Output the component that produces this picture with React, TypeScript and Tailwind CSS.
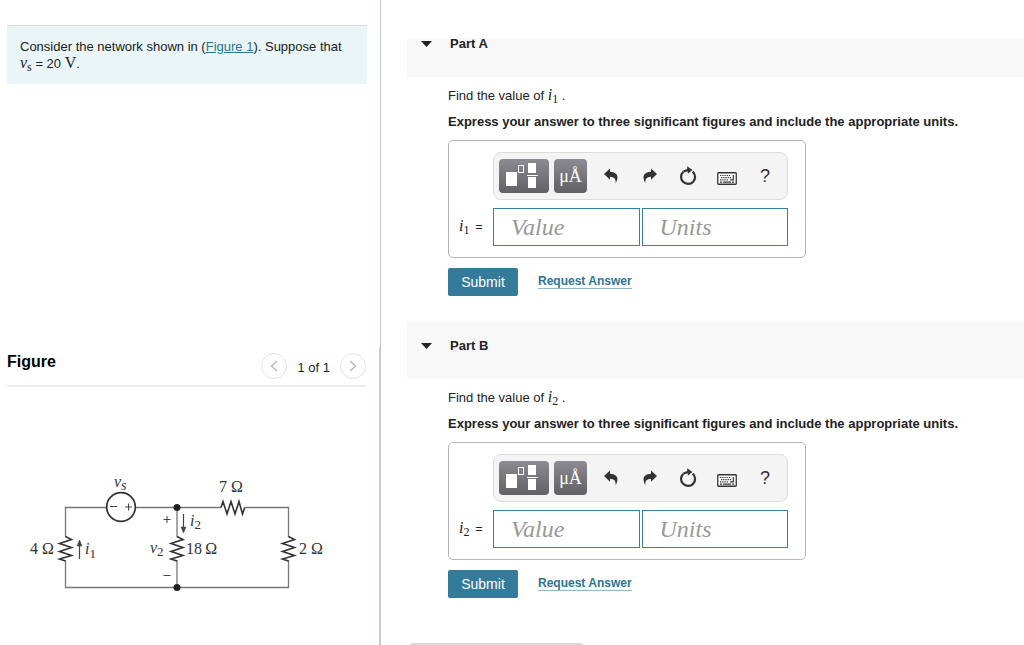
import { useState } from 'react';
import type { ReactNode } from 'react';

interface PartProps {
  letter: string;
  index: number;
}

// Math variable with a subscript, e.g. i₁
function MathVar({ name, sub, className = '' }: { name: string; sub: ReactNode; className?: string }) {
  return (
    <span className={`font-['Liberation_Serif',serif] text-base leading-none ${className}`}>
      <i>{name}</i>
      <sub className="text-xs">{sub}</sub>
    </span>
  );
}

function TemplatesIcon() {
  return (
    <svg width="50" height="34" viewBox="0 0 50 34" aria-hidden="true">
      <rect x="7" y="13" width="11" height="14" fill="#fff" />
      <rect x="19.5" y="6.5" width="5" height="7" fill="none" stroke="#fff" />
      <rect x="29" y="4" width="8" height="10" fill="#fff" />
      <rect x="28" y="16" width="11" height="1" fill="#fff" />
      <rect x="29" y="18" width="8" height="11" fill="#fff" />
    </svg>
  );
}

function UndoIcon({ className = '' }: { className?: string }) {
  return (
    <svg width="16" height="16" viewBox="0 0 16 16" className={className} aria-hidden="true">
      <path d="M1 6 7 .6v3.200c5.200.2 8 2.700 7.400 6.500-.2 1.600-.8 3.300-1.700 4.900.2-4.500-1.500-6.200-5.700-6.400v3z" fill="#333" />
    </svg>
  );
}

function ResetIcon() {
  return (
    <svg width="18" height="20" viewBox="0 0 18 20" aria-hidden="true">
      <path d="M13.600 5.600A7 7 0 1 1 4.400 5.700" fill="none" stroke="#333" strokeWidth="2.200" />
      <path d="M8.200.3 13.400 4 8.800 7.800V5.200L5 6.400 4 4.500 8.200 3z" fill="#333" />
    </svg>
  );
}

function KeyboardIcon() {
  return (
    <svg width="20" height="13" viewBox="0 0 20 13" aria-hidden="true">
      <rect x=".75" y=".75" width="18.500" height="11.500" rx=".8" fill="#fff" stroke="#333" strokeWidth="1.300" />
      <path d="M3 3.500h11M4 5.700h11M3 7.900h8" stroke="#333" strokeWidth="1.200" strokeDasharray="1.300 .9" />
      <path d="M16.300 3v5.500M13 7.900h3.800M3 10.100h2M6 10.100h8M15 10.100h2" stroke="#333" strokeWidth="1.200" />
    </svg>
  );
}

const toolBtn = 'flex w-8 h-8 items-center justify-center';
const darkBtn = 'flex h-[34px] items-center justify-center rounded-sm bg-linear-to-b from-[#8d8b93] to-[#616163] text-white';

function Toolbar() {
  return (
    <div className="flex h-12 items-center rounded-lg border border-[#dddddd] bg-[#f4f4f4] pr-1.5 pl-[5px]">
      <button className={`${darkBtn} w-[50px]`} aria-label="Templates">
        <TemplatesIcon />
      </button>
      <button className={`${darkBtn} ml-[5px] w-[33px] font-['Liberation_Serif',serif] text-lg`} aria-label="Symbols">
        μÅ
      </button>
      <div className="ml-2 flex flex-1 items-center justify-between">
        <button className={toolBtn} aria-label="Undo"><UndoIcon /></button>
        <button className={toolBtn} aria-label="Redo"><UndoIcon className="-scale-x-100" /></button>
        <button className={toolBtn} aria-label="Reset"><ResetIcon /></button>
        <button className={`${toolBtn} pt-1`} aria-label="Keyboard shortcuts"><KeyboardIcon /></button>
        <button className={`${toolBtn} text-lg text-[#333]`} aria-label="Help">?</button>
      </div>
    </div>
  );
}

const answerInput =
  "h-[38px] min-w-0 flex-1 border border-[#3a7f9f] bg-white px-[17px] font-['Liberation_Serif',serif] text-2xl italic text-[#333] outline-none placeholder:text-[#999]";

function Part({ letter, index }: PartProps) {
  const [open, setOpen] = useState(true);
  const [value, setValue] = useState('');
  const [units, setUnits] = useState('');

  return (
    <section className="pb-[26px]">
      <header className="h-[57px] bg-[#f8f8f8] pt-[15px] pl-3.5">
        <button
          onClick={() => setOpen(o => !o)}
          aria-expanded={open}
          className="flex items-center text-[13px] leading-[18px] font-bold text-[#222]"
        >
          <svg width="11" height="6" viewBox="0 0 11 6" className="mr-[18px]" aria-hidden="true">
            <path d="M0 0h11L5.500 6z" fill="#222" />
          </svg>
          Part {letter}
        </button>
      </header>

      {open && (
        <div className="pl-[41px] pr-4">
          <p className="mt-2.5 h-[18px] leading-[18px]">
            Find the value of <MathVar name="i" sub={index} /> .
          </p>
          <p className="mt-2 leading-[18px] font-bold">
            Express your answer to three significant figures and include the appropriate units.
          </p>

          <div className="mt-[9px] w-[358px] max-w-full rounded-[5px] border border-[#b5b5b5] py-[11px] pr-[17px] pl-11">
            <Toolbar />
            <div className="mt-2 flex gap-0.5">
              <label htmlFor={`value-${index}`} className="-ml-[34px] w-8 self-center whitespace-nowrap">
                <MathVar name="i" sub={index} />
                <span className="ml-1.5 text-xs">=</span>
              </label>
              <input
                id={`value-${index}`}
                className={answerInput}
                placeholder="Value"
                value={value}
                onChange={e => setValue(e.target.value)}
              />
              <input
                aria-label={`Units for i${index}`}
                className={answerInput}
                placeholder="Units"
                value={units}
                onChange={e => setUnits(e.target.value)}
              />
            </div>
          </div>

          <div className="mt-2.5 flex items-center">
            <button className="h-7 w-[70px] rounded-xs bg-[#337a9b] text-sm text-white">Submit</button>
            <a href="#request" className="ml-5 border-b border-[#8db8cc] text-xs leading-[13px] font-bold text-[#2b7596]">
              Request Answer
            </a>
          </div>
        </div>
      )}
    </section>
  );
}

function Circuit() {
  return (
    <svg
      width="310"
      height="130"
      viewBox="25 470 310 130"
      role="img"
      aria-label="Circuit diagram"
      className="font-['Liberation_Serif',serif]"
    >
      <g fill="none" stroke="#777" strokeWidth="1.300">
        <path d="M106 507.500H65.500V537M65.500 560v27.500h223V560M288.500 537v-29.500H244M221 507.500h-86M177 507.500V537M177 560v27.500" />
      </g>
      {/* resistors */}
      <g fill="none" stroke="#333" strokeWidth="1.600" strokeLinejoin="miter">
        <path d="M65.500 536.500l6 3-12 4 12 4-12 4 12 4-12 3.500 6 2" />
        <path d="M177 536.500l6 3-12 4 12 4-12 4 12 4-12 3.500 6 2" />
        <path d="M288.500 536.500l6 3-12 4 12 4-12 4 12 4-12 3.500 6 2" />
        <path d="M221 507.500l2-6 4 12.500 4-12.500 4 12.500 4-12.500 3.500 12.500 2-6" />
      </g>
      {/* voltage source */}
      <circle cx="121" cy="507" r="14.300" fill="#fff" stroke="#333" strokeWidth="1.700" />
      <path d="M110 506.500h7M125 507h7M128.500 503.500v7M163.500 519.500h7M167 516v7M163.500 575.500h7" stroke="#444" fill="none" />
      <circle cx="177" cy="507.500" r="3.500" fill="#222" />
      <circle cx="177" cy="587.500" r="3.500" fill="#222" />
      {/* current arrows */}
      <g fill="none" stroke="#444" strokeWidth="1.200">
        <path d="M79.500 559v-18M183.500 514v18" />
        <path d="M77 546l2.500-6 2.500 6zM181 527l2.500 6 2.500-6z" fill="#444" strokeWidth=".5" />
      </g>
      <g fill="#333" fontSize="16">
        <text x="30" y="554">4 Ω</text>
        <text x="219" y="492">7 Ω</text>
        <text x="186" y="554">18{'\u2009'}Ω</text>
        <text x="299" y="554">2 Ω</text>
        <text x="114" y="487" fontStyle="italic">v<tspan fontSize="14" dy="3">s</tspan></text>
        <text x="85" y="554" fontStyle="italic">i<tspan fontSize="13" dy="4" fontStyle="normal">1</tspan></text>
        <text x="190" y="526" fontStyle="italic">i<tspan fontSize="13" dy="3" fontStyle="normal">2</tspan></text>
        <text x="150" y="553" fontStyle="italic">v<tspan fontSize="13" dy="3" fontStyle="normal">2</tspan></text>
      </g>
    </svg>
  );
}

const pagerBtn = 'flex size-[26px] items-center justify-center rounded-full border border-[#e2e2e2]';

export default function App() {
  return (
    <div className="flex h-screen overflow-hidden bg-white font-['Liberation_Sans',Arial,sans-serif] text-[13px] text-[#222]">
      <aside className="flex w-3/8 flex-col pr-[3px]">
        <div className="h-[347px] shrink-0 border-r border-[#b9cbdc] pt-[25px] pr-[13px] pl-[7px]">
          <div className="border-t border-[#dcdcdc] bg-[#e9f5f7] px-[13px] pt-[13px] pb-[13px] leading-4">
            <p>
              Consider the network shown in (
              <a href="#figure" className="text-[#2b7596] underline">Figure 1</a>
              ). Suppose that
            </p>
            <p className="h-4">
              <MathVar name="v" sub="s" /> = 20{' '}
              <span className="font-['Liberation_Serif',serif] text-base leading-none">V</span>.
            </p>
          </div>
        </div>

        <div id="figure" className="flex-1 border-r-2 border-[#b9cbdc] pr-[13px] pl-[7px]">
          <div className="flex h-10 items-center justify-between border-b-2 border-[#ebebeb]">
            <h2 className="pb-2 text-base font-bold text-black">Figure</h2>
            <div className="flex items-center gap-2.5">
              <button className={pagerBtn} aria-label="Previous figure">
                <svg width="8" height="12" viewBox="0 0 8 12" fill="none" stroke="#bbb" strokeWidth="1.500">
                  <path d="M7 1 1.500 6 7 11" />
                </svg>
              </button>
              <span className="pt-1">1 of 1</span>
              <button className={pagerBtn} aria-label="Next figure">
                <svg width="8" height="12" viewBox="0 0 8 12" fill="none" stroke="#bbb" strokeWidth="1.500">
                  <path d="M1 1l5.500 5L1 11" />
                </svg>
              </button>
            </div>
          </div>
          <div className="pt-[83px] pl-[18px]">
            <Circuit />
          </div>
        </div>
      </aside>

      <main className="min-w-0 flex-1 pt-[39px] pl-[23px]">
        {/* scrolled slightly past the top of the first part */}
        <div className="h-full overflow-hidden">
          <div className="-mt-[19px]">
            <Part letter="A" index={1} />
            <Part letter="B" index={2} />
            <div className="mt-[19px] ml-0.5 h-8 w-[175px] rounded-sm bg-[#d8d8d8]" />
          </div>
        </div>
      </main>
    </div>
  );
}
